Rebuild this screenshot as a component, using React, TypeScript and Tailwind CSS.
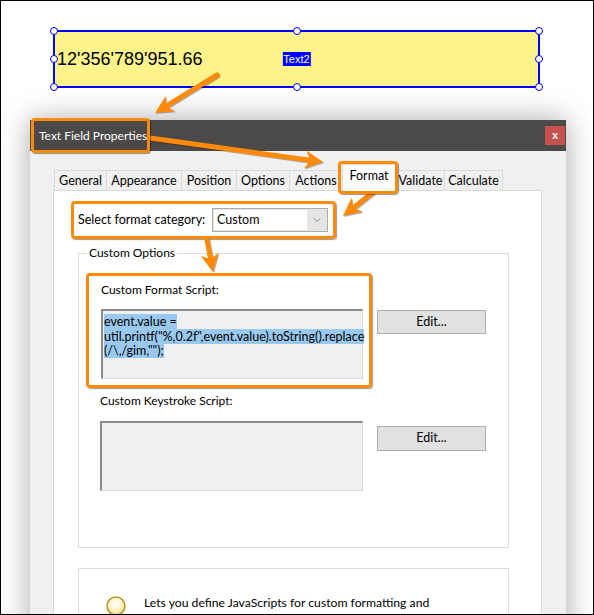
import { ChevronDown } from "lucide-react";

const tabs = [
  { label: "General", w: "w-[52px]" },
  { label: "Appearance", w: "w-[75px]" },
  { label: "Position", w: "w-[55px]" },
  { label: "Options", w: "w-[53px]" },
  { label: "Actions", w: "w-[53px]" },
  { label: "Format", w: "w-[54px]", active: true },
  { label: "Validate", w: "w-[48px]" },
  { label: "Calculate", w: "w-[59px]" },
];

// orange call-out arrow, page coordinates
function Arrow({ x1, y1, x2, y2 }: { x1: number; y1: number; x2: number; y2: number }) {
  const len = Math.hypot(x2 - x1, y2 - y1);
  const ux = (x2 - x1) / len;
  const uy = (y2 - y1) / len;
  const px = -uy;
  const py = ux;
  const hl = 18;
  const hw = 9;
  const notch = 5;
  const bx = x2 - ux * hl;
  const by = y2 - uy * hl;
  const nx = x2 - ux * (hl - notch);
  const ny = y2 - uy * (hl - notch);
  const head = `${x2},${y2} ${bx + px * hw},${by + py * hw} ${nx},${ny} ${bx - px * hw},${by - py * hw}`;
  return (
    <g>
      <g transform="translate(1,1)" opacity="0.3">
        <line x1={x1} y1={y1} x2={nx} y2={ny} stroke="#000" strokeWidth="5" strokeLinecap="round" />
        <polygon points={head} fill="#000" />
      </g>
      <line x1={x1} y1={y1} x2={nx} y2={ny} stroke="#ff8a0a" strokeWidth="5" strokeLinecap="round" />
      <polygon points={head} fill="#ff8a0a" />
    </g>
  );
}

function Handle({ className }: { className: string }) {
  return <span className={`absolute w-[8px] h-[8px] rounded-full bg-white border-[1.5px] border-[#0000ff] ${className}`} />;
}

function Edit({ className }: { className: string }) {
  return (
    <button className={`w-[109px] bg-[#e1e1e1] border border-[#adadad] text-[12.5px] text-black flex items-center justify-center ${className}`}>
      Edit...
    </button>
  );
}

const scriptBox =
  "bg-[#f0f0f0] border-t-2 border-l-2 border-b border-r border-t-[#8c8c8c] border-l-[#8c8c8c] border-b-[#dadada] border-r-[#dadada]";

export default function App() {
  return (
    <div className="relative w-[594px] h-[615px] overflow-hidden bg-white border border-black font-['Lato',sans-serif] text-black">
      {/* the form field on the page */}
      <div className="relative ml-[52px] mt-[29px] w-[487px] h-[58px] border-2 border-[#0000ff] bg-[#fcf38b] flex items-center pl-[2px]">
        <span className="font-['Liberation_Sans',Arial,sans-serif] text-[18px] leading-none">12'356'789'951.66</span>
        <span className="absolute left-1/2 top-1/2 -translate-x-1/2 -translate-y-1/2 bg-[#0000ff] text-white font-['Liberation_Sans',Arial,sans-serif] text-[11px] leading-[14px] px-[1px]">
          Text2
        </span>
        <Handle className="-left-[5px] -top-[5px]" />
        <Handle className="left-1/2 -translate-x-1/2 -top-[5px]" />
        <Handle className="-right-[5px] -top-[5px]" />
        <Handle className="-left-[5px] top-1/2 -translate-y-1/2" />
        <Handle className="-right-[5px] top-1/2 -translate-y-1/2" />
        <Handle className="-left-[5px] -bottom-[5px]" />
        <Handle className="left-1/2 -translate-x-1/2 -bottom-[5px]" />
        <Handle className="-right-[5px] -bottom-[5px]" />
      </div>

      {/* dialog */}
      <div className="ml-[29px] mt-[32px] w-[536px] shadow-[0_0_28px_rgba(0,0,0,0.35)]">
        <div className="h-[31px] bg-[#4b4a48] flex items-center pr-[1px]">
          <div className="relative z-10 ml-[1px] h-[35px] w-[119px] border-[3px] border-[#ff8a0a] rounded-[4px] bg-[#4b4a48] flex items-center pl-[5px] text-white text-[12px] whitespace-nowrap shadow-[1px_1px_1px_rgba(0,0,0,0.4)]">
            Text Field Properties
          </div>
          <div className="ml-auto w-[20px] h-[19px] bg-[#c75050] text-white text-[11px] font-bold flex items-center justify-center leading-none pb-[2px]">
            x
          </div>
        </div>

        <div className="bg-[#f0f0f0] pt-[13px] pl-[23px] pb-[40px] text-[12px]">
          <div className="flex items-end ml-[1px]">
            {tabs.map((t, i) =>
              t.active ? (
                <div key={t.label} className={`relative z-10 -mb-px h-[27px] ${t.w} bg-white border-t border-l border-r border-[#d9d9d9] flex items-center justify-center pb-[3px] text-[12.5px]`}>
                  {t.label}
                  <span className="absolute -left-[5px] -right-[3px] -top-[4px] -bottom-[3px] border-[3px] border-[#ff8a0a] rounded-[4px] shadow-[1px_1px_1px_rgba(0,0,0,0.4)]" />
                </div>
              ) : (
                <div
                  key={t.label}
                  className={`h-[20px] ${t.w} border-t border-l border-[#d9d9d9] ${i === tabs.length - 1 ? "border-r" : ""} flex items-center justify-center pt-[1px] text-[12.5px]`}
                >
                  {t.label}
                </div>
              )
            )}
          </div>

          <div className="w-[489px] h-[480px] bg-white border border-[#d9d9d9] pt-[10px] pl-[17px]">
            <div className="w-[265px] h-[38px] border-[3px] border-[#ff8a0a] rounded-[4px] flex items-center pl-[4px] pr-[5px] shadow-[1px_1px_1px_rgba(0,0,0,0.4)] text-[12.5px]">
              <span className="pt-[1px]">Select format category:</span>
              <div className="ml-auto w-[116px] h-[24px] border border-[#acacac] bg-[#e5e5e5] flex p-[1px]">
                <div className="flex-1 bg-white flex items-center pl-[3px] pt-[1px]">Custom</div>
                <div className="w-[19px] flex items-center justify-center text-[#606060]">
                  <ChevronDown size={12} strokeWidth={1.5} />
                </div>
              </div>
            </div>

            <fieldset className="ml-[7px] mt-[6px] w-[431px] border border-[#dcdcdc] pb-[56px]">
              <legend className="ml-[8px] px-[2px] leading-[16px]">Custom Options</legend>

              <div className="flex ml-[7px] mt-[12px]">
                <div className="w-[286px] border-[3px] border-[#ff8a0a] rounded-[4px] pt-[6px] pl-[12px] pb-[6px] shadow-[1px_1px_1px_rgba(0,0,0,0.4)]">
                  <div className="leading-[16px]">Custom Format Script:</div>
                  <div className={`mt-[11px] w-[262px] h-[70px] ${scriptBox} pt-[4px] pl-[1px] leading-[14.5px] text-[12.5px]`}>
                    <div><span className="bg-[#99c9ef]">event.value = </span></div>
                    <div className="whitespace-nowrap"><span className="bg-[#99c9ef]">util.printf("%,0.2f",event.value).toString().replace</span></div>
                    <div><span className="bg-[#99c9ef]">{'(/\\,/gim,"");'}</span></div>
                  </div>
                </div>
                <Edit className="ml-[5px] mt-[37px] h-[24px]" />
              </div>

              <div className="flex ml-[21px] mt-[5px]">
                <div className="w-[263px]">
                  <div className="leading-[16px]">Custom Keystroke Script:</div>
                  <div className={`mt-[12px] w-[263px] h-[70px] ${scriptBox}`} />
                </div>
                <Edit className="ml-[14px] mt-[33px] h-[25px]" />
              </div>
            </fieldset>

            <div className="ml-[7px] mt-[20px] w-[431px] border border-[#dcdcdc] pt-[27px] pl-[27px] pb-[20px] flex items-start">
              <svg width="20" height="20" viewBox="0 0 20 20" className="shrink-0">
                <defs>
                  <radialGradient id="bulb" cx="45%" cy="40%" r="60%">
                    <stop offset="0%" stopColor="#ffffff" />
                    <stop offset="60%" stopColor="#fdf3c4" />
                    <stop offset="100%" stopColor="#f0d67a" />
                  </radialGradient>
                </defs>
                <circle cx="10" cy="10" r="9" fill="url(#bulb)" stroke="#b8962e" strokeWidth="1.5" />
              </svg>
              <p className="ml-[18px] leading-[16px] -mt-[1px] text-[12.2px]">Lets you define JavaScripts for custom formatting and</p>
            </div>
          </div>
        </div>
      </div>

      {/* call-out arrows */}
      <svg className="absolute -left-px -top-px pointer-events-none" width="594" height="615">
        <Arrow x1={217} y1={75} x2={155} y2={113} />
        <Arrow x1={150} y1={138} x2={323} y2={162} />
        <Arrow x1={372} y1={193} x2={343} y2={216} />
        <Arrow x1={207} y1={240} x2={213} y2={272} />
      </svg>
    </div>
  );
}
